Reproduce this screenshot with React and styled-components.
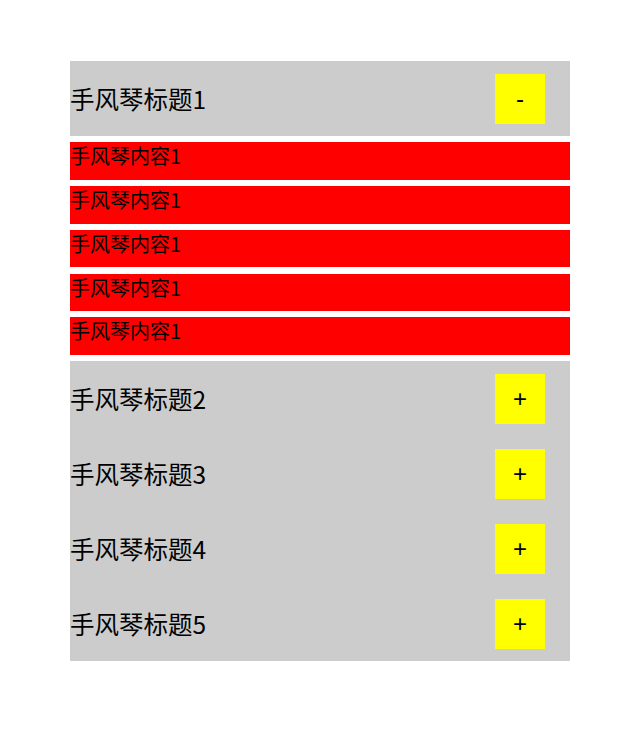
import React, { useState } from 'react';
import styled, { createGlobalStyle } from 'styled-components';

const GlobalStyle = createGlobalStyle`
    html, body {
        margin: 0;
        padding: 0;
        background: #fff;
    }
    body {
        font-family: "Noto Sans CJK SC", "Noto Sans", sans-serif;
        color: #000;
    }
`;

const items = [1, 2, 3, 4, 5];

function App() {
    const [open, setOpen] = useState(0);
    const toggle = (index) => {
        setOpen(current => current === index ? -1 : index);
    };
    return (
        <>
            <GlobalStyle />
            <Accordion>
                {items.map((n, index) => (
                    <Section key={n}>
                        <Header>
                            <Title>手风琴标题{n}</Title>
                            <ToggleButton onClick={() => toggle(index)}>
                                {open === index ? '-' : '+'}
                            </ToggleButton>
                        </Header>
                        {open === index && (
                            <ContentList>
                                {items.map(k => (
                                    <ContentItem key={k}>手风琴内容{n}</ContentItem>
                                ))}
                            </ContentList>
                        )}
                    </Section>
                ))}
            </Accordion>
        </>
    );
}

const Accordion = styled.div`
    width: 500px;
    margin: 61px 0 0 70px;
`;
const Section = styled.div`
    display: flex;
    flex-direction: column;
`;
const Header = styled.div`
    display: flex;
    align-items: center;
    justify-content: space-between;
    height: 75px;
    padding-right: 25px;
    background: #ccc;
`;
const Title = styled.div`
    font-size: 24.5px;
`;
const ToggleButton = styled.div`
    display: flex;
    align-items: center;
    justify-content: center;
    width: 50px;
    height: 50px;
    background: #ff0;
    font-family: "Liberation Sans", sans-serif;
    font-size: 24px;
    cursor: pointer;
`;
const ContentList = styled.div`
    display: flex;
    flex-direction: column;
    gap: 6.25px;
    padding: 6.25px 0;
`;
const ContentItem = styled.div`
    height: 37.5px;
    background: #f00;
    font-size: 20px;
    line-height: 28px;
`;

export default App;
